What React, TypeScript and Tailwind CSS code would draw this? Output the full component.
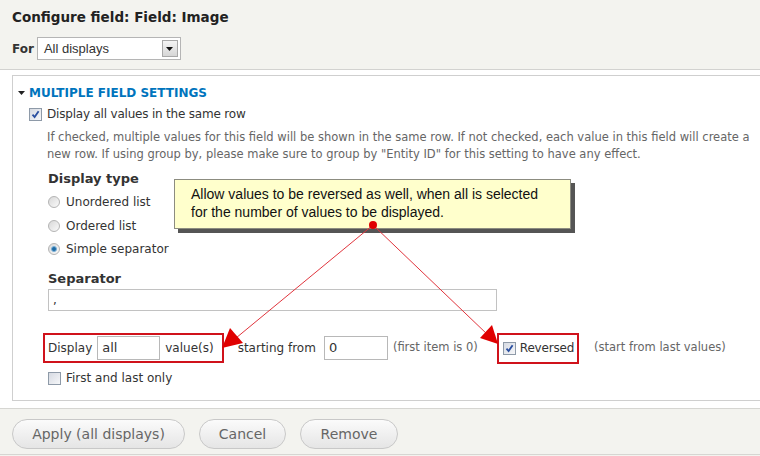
import React from 'react';

const Check: React.FC<{ checked?: boolean }> = ({ checked }) => (
  <span className="inline-flex items-center justify-center w-[13px] h-[13px] border border-[#8e9aa8] bg-gradient-to-br from-[#d6dae2] to-[#f6f7f9] shrink-0">
    {checked && (
      <svg width="9" height="9" viewBox="0 0 9 9">
        <path d="M1.5 4.6 L3.6 7 L7.6 1.2" fill="none" stroke="#2a4fa0" strokeWidth="1.8" />
      </svg>
    )}
  </span>
);

const Radio: React.FC<{ checked?: boolean }> = ({ checked }) => (
  <span className="inline-flex items-center justify-center w-[12px] h-[12px] rounded-full border border-[#b4b4b4] bg-gradient-to-br from-[#d8d8d8] to-[#fafafa] shrink-0">
    {checked && <span className="w-[6px] h-[6px] rounded-full bg-[#1f6aa3] border border-[#7ab0d8]" />}
  </span>
);

const TextBox: React.FC<{ value: string; w: string }> = ({ value, w }) => (
  <span className={`inline-flex items-center h-[24px] border border-[#b8b8b8] bg-white px-[4px] text-[13px] text-[#333] ${w}`}>
    {value}
  </span>
);

const Btn: React.FC<{ label: string; w: string }> = ({ label, w }) => (
  <span className={`inline-flex items-center justify-center h-[30px] rounded-full border border-[#c8c8c8] bg-gradient-to-b from-[#fbfbfb] to-[#e5e5e5] text-[14px] text-[#666] ${w}`}>
    {label}
  </span>
);

export default function App() {
  return (
    <div className="relative w-[760px] h-[456px] overflow-hidden bg-[#f3f3ef] text-[#333]" style={{ fontFamily: '"DejaVu Sans", Verdana, sans-serif' }}>
      {/* header */}
      <div className="h-[70px] pl-[12px] border-b border-[#d2d2d0]">
        <h1 className="pt-[8px] h-[37px] text-[13.5px] font-bold leading-[18px] text-[#222]">Configure field: Field: Image</h1>
        <div className="flex items-center gap-[3px] h-[23px]">
          <span className="text-[12px] font-bold">For</span>
          <span className="flex items-center justify-between w-[144px] h-[23px] border border-[#b5b5b5] bg-white pl-[6px] pr-[2px] text-[13px]" style={{ fontFamily: '"Liberation Sans", Arial, sans-serif' }}>
            All displays
            <span className="flex items-center justify-center w-[16px] h-[17px] border border-[#a8a8a8] bg-gradient-to-b from-[#f4f4f4] to-[#d6d6d6]">
              <svg width="7" height="4" viewBox="0 0 7 4"><path d="M0 0 H7 L3.5 4 Z" fill="#111" /></svg>
            </span>
          </span>
        </div>
      </div>

      {/* form body */}
      <div className="bg-white pt-[5px] pl-[12px] h-[338px]">
        <div className="h-[326px] border border-r-0 border-[#cfcfcf] pl-[5px]">
          <div className="flex items-center h-[31px] pt-[2px] gap-[4px] text-[#0074bd] text-[12px] font-bold">
            <svg width="7" height="4" viewBox="0 0 7 4"><path d="M0 0 H7 L3.5 4 Z" fill="#222" /></svg>
            MULTIPLE FIELD SETTINGS
          </div>
          <div className="flex items-center gap-[5px] pl-[11px] h-[14px] text-[12px] tracking-[-0.2px]">
            <Check checked />
            <span>Display all values in the same row</span>
          </div>
          <div className="pl-[29px] pt-[8px] text-[11.5px] leading-[17px] text-[#666] h-[47px]">
            If checked, multiple values for this field will be shown in the same row. If not checked, each value in this field will create a new row. If using group by, please make sure to group by "Entity ID" for this setting to have any effect.
          </div>
          <div className="pl-[30px]">
            <div className="h-[22px] text-[13px] font-bold leading-[22px]">Display type</div>
            <div className="flex items-center gap-[6px] h-[24px] text-[12px]"><Radio /> Unordered list</div>
            <div className="flex items-center gap-[6px] h-[23px] text-[12px]"><Radio /> Ordered list</div>
            <div className="flex items-center gap-[6px] h-[24px] text-[12px]"><Radio checked /> Simple separator</div>
            <div className="h-[28px] pt-[7px] text-[13px] font-bold leading-[22px]">Separator</div>
            <div className="h-[22px] w-[449px] border border-[#c2c2c2] text-[12px] pl-[4px] leading-[20px]">,</div>

            <div className="flex items-center h-[30px] mt-[22px] -ml-[5px] text-[12px]">
              <div className="flex items-center gap-[5px] h-[30px] border-2 border-[#d0121b] pl-[3px] pr-[8px]">
                <span>Display</span>
                <TextBox value="all" w="w-[63px]" />
                <span>value(s)</span>
              </div>
              <span className="ml-[14px] mr-[8px]">starting from</span>
              <TextBox value="0" w="w-[64px]" />
              <span className="ml-[5px] text-[11.5px] text-[#666]">(first item is 0)</span>
              <div className="flex items-center gap-[4px] h-[31px] ml-[19px] border-2 border-[#d0121b] pl-[4px] pr-[3px] tracking-[-0.2px]">
                <Check checked />
                <span>Reversed</span>
              </div>
              <span className="ml-[15px] text-[11.5px] text-[#666]">(start from last values)</span>
            </div>
            <div className="flex items-center gap-[5px] h-[14px] mt-[8px] text-[12px]">
              <Check />
              <span>First and last only</span>
            </div>
          </div>
        </div>
      </div>

      {/* actions */}
      <div className="flex items-center gap-[14px] pl-[12px] pt-[5px] h-[47px] border-t border-[#d6d6d2] border-b">
        <Btn label="Apply (all displays)" w="w-[173px]" />
        <Btn label="Cancel" w="w-[87px]" />
        <Btn label="Remove" w="w-[98px]" />
      </div>

      {/* callout */}
      <div className="absolute left-[174px] top-[179px] w-[397px] h-[50px] bg-[#ffffcc] border border-[#8c8c80] shadow-[4px_4px_0_#555] pl-[16px] pt-[5px] text-[14px] leading-[18px] text-[#111]" style={{ fontFamily: '"Liberation Sans", Arial, sans-serif' }}>
        Allow values to be reversed as well, when all is selected<br />for the number of values to be displayed.
      </div>
      <svg className="absolute left-0 top-0 pointer-events-none" width="760" height="456" viewBox="0 0 760 456">
        <line x1="373" y1="225" x2="236" y2="338" stroke="#e0353d" strokeWidth="1" />
        <line x1="373" y1="225" x2="488" y2="335" stroke="#e0353d" strokeWidth="1" />
        <polygon points="222,348 230,328 243,343" fill="#e00000" />
        <polygon points="498,344 480,338 492,325" fill="#e00000" />
        <circle cx="373" cy="225" r="4" fill="#e00000" />
      </svg>
    </div>
  );
}
